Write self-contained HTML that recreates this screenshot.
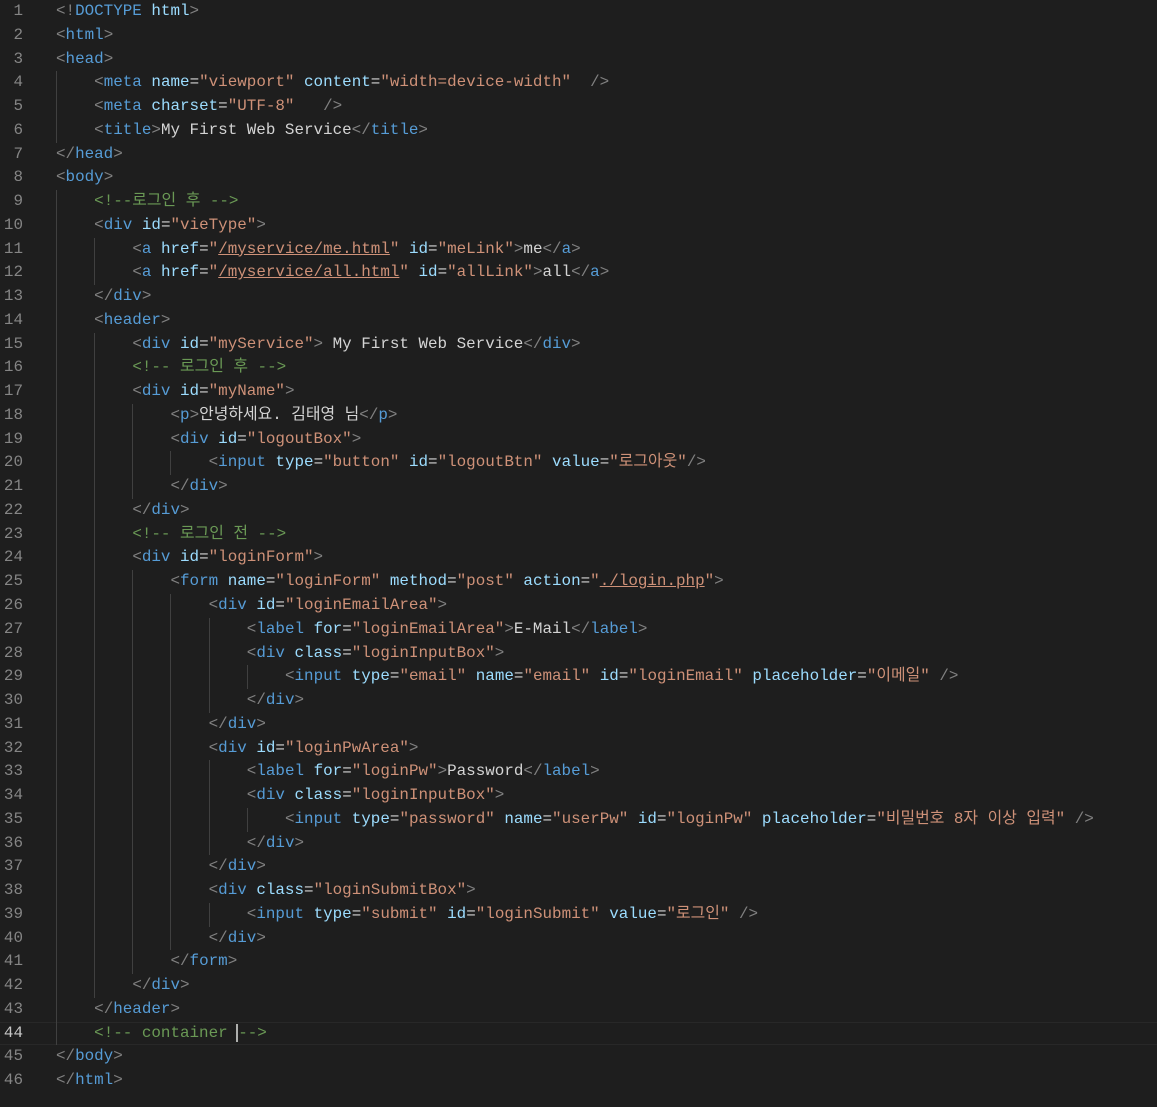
<!DOCTYPE html>
<html><head><meta charset="utf-8"><style>
body{margin:0;background:#1e1e1e;width:1157px;height:1107px;overflow:hidden;position:relative;font-family:"Liberation Mono","Noto Sans CJK KR",monospace;font-size:15.9px}
.l{position:absolute;left:0;height:23.76px;line-height:23.76px;white-space:pre;width:1157px}
.n{position:absolute;left:0;width:23px;text-align:right;color:#858585}
.c0{position:absolute;left:56px;color:#d4d4d4}
.t{color:#569cd6}.b{color:#808080}.a{color:#9cdcfe}.s{color:#ce9178}.c{color:#6a9955}.u{text-decoration:underline}
.g{position:absolute;width:1px;background:#404040;height:23.76px}
.cur{position:absolute;left:0;top:0;width:1157px;height:23.76px;box-sizing:border-box;border-top:1px solid #282828;border-bottom:1px solid #282828}
</style></head><body>
<div class="cur" style="top:1021.7px"></div>
<div id="code"></div>
<script>
const L=[
[0,'<span class="b">&lt;!</span><span class="t">DOCTYPE</span> <span class="a">html</span><span class="b">&gt;</span>'],
[0,'<span class="b">&lt;</span><span class="t">html</span><span class="b">&gt;</span>'],
[0,'<span class="b">&lt;</span><span class="t">head</span><span class="b">&gt;</span>'],
[1,'<span class="b">&lt;</span><span class="t">meta</span> <span class="a">name</span>=<span class="s">"viewport"</span> <span class="a">content</span>=<span class="s">"width=device-width"</span>  <span class="b">/&gt;</span>'],
[1,'<span class="b">&lt;</span><span class="t">meta</span> <span class="a">charset</span>=<span class="s">"UTF-8"</span>   <span class="b">/&gt;</span>'],
[1,'<span class="b">&lt;</span><span class="t">title</span><span class="b">&gt;</span>My First Web Service<span class="b">&lt;/</span><span class="t">title</span><span class="b">&gt;</span>'],
[0,'<span class="b">&lt;/</span><span class="t">head</span><span class="b">&gt;</span>'],
[0,'<span class="b">&lt;</span><span class="t">body</span><span class="b">&gt;</span>'],
[1,'<span class="c">&lt;!--로그인 후 --&gt;</span>'],
[1,'<span class="b">&lt;</span><span class="t">div</span> <span class="a">id</span>=<span class="s">"vieType"</span><span class="b">&gt;</span>'],
[2,'<span class="b">&lt;</span><span class="t">a</span> <span class="a">href</span>=<span class="s">"<span class="u">/myservice/me.html</span>"</span> <span class="a">id</span>=<span class="s">"meLink"</span><span class="b">&gt;</span>me<span class="b">&lt;/</span><span class="t">a</span><span class="b">&gt;</span>'],
[2,'<span class="b">&lt;</span><span class="t">a</span> <span class="a">href</span>=<span class="s">"<span class="u">/myservice/all.html</span>"</span> <span class="a">id</span>=<span class="s">"allLink"</span><span class="b">&gt;</span>all<span class="b">&lt;/</span><span class="t">a</span><span class="b">&gt;</span>'],
[1,'<span class="b">&lt;/</span><span class="t">div</span><span class="b">&gt;</span>'],
[1,'<span class="b">&lt;</span><span class="t">header</span><span class="b">&gt;</span>'],
[2,'<span class="b">&lt;</span><span class="t">div</span> <span class="a">id</span>=<span class="s">"myService"</span><span class="b">&gt;</span> My First Web Service<span class="b">&lt;/</span><span class="t">div</span><span class="b">&gt;</span>'],
[2,'<span class="c">&lt;!-- 로그인 후 --&gt;</span>'],
[2,'<span class="b">&lt;</span><span class="t">div</span> <span class="a">id</span>=<span class="s">"myName"</span><span class="b">&gt;</span>'],
[3,'<span class="b">&lt;</span><span class="t">p</span><span class="b">&gt;</span>안녕하세요. 김태영 님<span class="b">&lt;/</span><span class="t">p</span><span class="b">&gt;</span>'],
[3,'<span class="b">&lt;</span><span class="t">div</span> <span class="a">id</span>=<span class="s">"logoutBox"</span><span class="b">&gt;</span>'],
[4,'<span class="b">&lt;</span><span class="t">input</span> <span class="a">type</span>=<span class="s">"button"</span> <span class="a">id</span>=<span class="s">"logoutBtn"</span> <span class="a">value</span>=<span class="s">"로그아웃"</span><span class="b">/&gt;</span>'],
[3,'<span class="b">&lt;/</span><span class="t">div</span><span class="b">&gt;</span>'],
[2,'<span class="b">&lt;/</span><span class="t">div</span><span class="b">&gt;</span>'],
[2,'<span class="c">&lt;!-- 로그인 전 --&gt;</span>'],
[2,'<span class="b">&lt;</span><span class="t">div</span> <span class="a">id</span>=<span class="s">"loginForm"</span><span class="b">&gt;</span>'],
[3,'<span class="b">&lt;</span><span class="t">form</span> <span class="a">name</span>=<span class="s">"loginForm"</span> <span class="a">method</span>=<span class="s">"post"</span> <span class="a">action</span>=<span class="s">"<span class="u">./login.php</span>"</span><span class="b">&gt;</span>'],
[4,'<span class="b">&lt;</span><span class="t">div</span> <span class="a">id</span>=<span class="s">"loginEmailArea"</span><span class="b">&gt;</span>'],
[5,'<span class="b">&lt;</span><span class="t">label</span> <span class="a">for</span>=<span class="s">"loginEmailArea"</span><span class="b">&gt;</span>E-Mail<span class="b">&lt;/</span><span class="t">label</span><span class="b">&gt;</span>'],
[5,'<span class="b">&lt;</span><span class="t">div</span> <span class="a">class</span>=<span class="s">"loginInputBox"</span><span class="b">&gt;</span>'],
[6,'<span class="b">&lt;</span><span class="t">input</span> <span class="a">type</span>=<span class="s">"email"</span> <span class="a">name</span>=<span class="s">"email"</span> <span class="a">id</span>=<span class="s">"loginEmail"</span> <span class="a">placeholder</span>=<span class="s">"이메일"</span> <span class="b">/&gt;</span>'],
[5,'<span class="b">&lt;/</span><span class="t">div</span><span class="b">&gt;</span>'],
[4,'<span class="b">&lt;/</span><span class="t">div</span><span class="b">&gt;</span>'],
[4,'<span class="b">&lt;</span><span class="t">div</span> <span class="a">id</span>=<span class="s">"loginPwArea"</span><span class="b">&gt;</span>'],
[5,'<span class="b">&lt;</span><span class="t">label</span> <span class="a">for</span>=<span class="s">"loginPw"</span><span class="b">&gt;</span>Password<span class="b">&lt;/</span><span class="t">label</span><span class="b">&gt;</span>'],
[5,'<span class="b">&lt;</span><span class="t">div</span> <span class="a">class</span>=<span class="s">"loginInputBox"</span><span class="b">&gt;</span>'],
[6,'<span class="b">&lt;</span><span class="t">input</span> <span class="a">type</span>=<span class="s">"password"</span> <span class="a">name</span>=<span class="s">"userPw"</span> <span class="a">id</span>=<span class="s">"loginPw"</span> <span class="a">placeholder</span>=<span class="s">"비밀번호 8자 이상 입력"</span> <span class="b">/&gt;</span>'],
[5,'<span class="b">&lt;/</span><span class="t">div</span><span class="b">&gt;</span>'],
[4,'<span class="b">&lt;/</span><span class="t">div</span><span class="b">&gt;</span>'],
[4,'<span class="b">&lt;</span><span class="t">div</span> <span class="a">class</span>=<span class="s">"loginSubmitBox"</span><span class="b">&gt;</span>'],
[5,'<span class="b">&lt;</span><span class="t">input</span> <span class="a">type</span>=<span class="s">"submit"</span> <span class="a">id</span>=<span class="s">"loginSubmit"</span> <span class="a">value</span>=<span class="s">"로그인"</span> <span class="b">/&gt;</span>'],
[4,'<span class="b">&lt;/</span><span class="t">div</span><span class="b">&gt;</span>'],
[3,'<span class="b">&lt;/</span><span class="t">form</span><span class="b">&gt;</span>'],
[2,'<span class="b">&lt;/</span><span class="t">div</span><span class="b">&gt;</span>'],
[1,'<span class="b">&lt;/</span><span class="t">header</span><span class="b">&gt;</span>'],
[1,'<span class="c">&lt;!-- container <span style="border-left:2px solid #aeafad;margin-left:-1px"></span>--&gt;</span>'],
[0,'<span class="b">&lt;/</span><span class="t">body</span><span class="b">&gt;</span>'],
[0,'<span class="b">&lt;/</span><span class="t">html</span><span class="b">&gt;</span>']];
const W=38.16,H=23.76;let h='';
L.forEach((x,i)=>{const top=i*H;
for(let k=0;k<x[0];k++)h+=`<div class="g" style="left:${56+k*W}px;top:${top}px"></div>`;
h+=`<div class="l" style="top:${top}px"><span class="n" style="${i==43?'color:#c6c6c6':''}">${i+1}</span><span class="c0" style="left:${56+x[0]*W}px">${x[1]}</span></div>`;});
document.getElementById('code').innerHTML=h;
</script>
</body></html>
